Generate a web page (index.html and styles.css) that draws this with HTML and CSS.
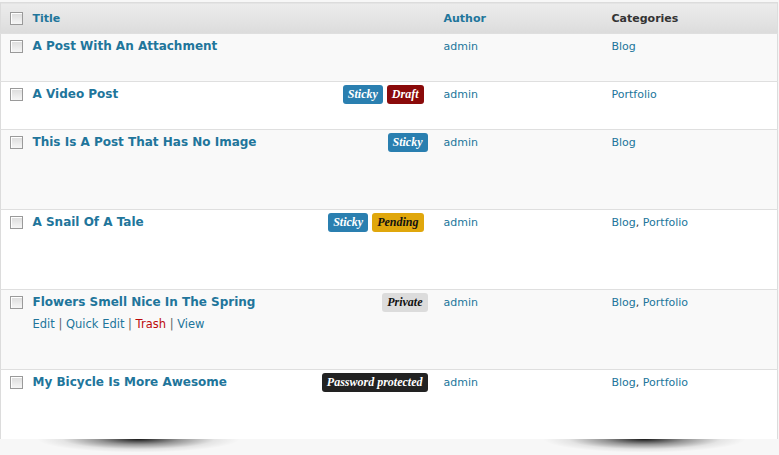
FILE: index.html
```html
<!DOCTYPE html>
<html lang="en">
<head>
    <meta charset="UTF-8">
    <meta name="viewport" content="width=device-width, initial-scale=1.0">
    <title>Posts</title>
    <link rel="stylesheet" href="styles.css">
</head>
<body>
    <div class="wrap">
        <table class="posts">
            <colgroup>
                <col class="col-check">
                <col class="col-title">
                <col class="col-author">
                <col class="col-cats">
            </colgroup>
            <thead>
                <tr>
                    <th class="check"><span class="box"></span></th>
                    <th><a href="#">Title</a></th>
                    <th><a href="#">Author</a></th>
                    <th class="plain">Categories</th>
                </tr>
            </thead>
            <tbody>
                <tr class="alt short">
                    <td class="check"><span class="box"></span></td>
                    <td class="title-cell"><div class="title-line"><a class="row-title" href="#">A Post With An Attachment</a></div></td>
                    <td><a href="#">admin</a></td>
                    <td><a href="#">Blog</a></td>
                </tr>
                <tr class="short">
                    <td class="check"><span class="box"></span></td>
                    <td class="title-cell">
                        <div class="title-line">
                            <a class="row-title" href="#">A Video Post</a>
                            <span class="badges pair"><span class="badge sticky">Sticky</span><span class="badge draft">Draft</span></span>
                        </div>
                    </td>
                    <td><a href="#">admin</a></td>
                    <td><a href="#">Portfolio</a></td>
                </tr>
                <tr class="alt tall">
                    <td class="check"><span class="box"></span></td>
                    <td class="title-cell">
                        <div class="title-line">
                            <a class="row-title" href="#">This Is A Post That Has No Image</a>
                            <span class="badges"><span class="badge sticky">Sticky</span></span>
                        </div>
                    </td>
                    <td><a href="#">admin</a></td>
                    <td><a href="#">Blog</a></td>
                </tr>
                <tr class="tall">
                    <td class="check"><span class="box"></span></td>
                    <td class="title-cell">
                        <div class="title-line">
                            <a class="row-title" href="#">A Snail Of A Tale</a>
                            <span class="badges pair"><span class="badge sticky">Sticky</span><span class="badge pending">Pending</span></span>
                        </div>
                    </td>
                    <td><a href="#">admin</a></td>
                    <td><a href="#">Blog</a>, <a href="#">Portfolio</a></td>
                </tr>
                <tr class="alt tall">
                    <td class="check"><span class="box"></span></td>
                    <td class="title-cell">
                        <div class="title-line">
                            <a class="row-title" href="#">Flowers Smell Nice In The Spring</a>
                            <span class="badges"><span class="badge private">Private</span></span>
                        </div>
                        <div class="row-actions">
                            <a href="#">Edit</a> | <a href="#">Quick Edit</a> | <a class="trash" href="#">Trash</a> | <a href="#">View</a>
                        </div>
                    </td>
                    <td><a href="#">admin</a></td>
                    <td><a href="#">Blog</a>, <a href="#">Portfolio</a></td>
                </tr>
                <tr class="last">
                    <td class="check"><span class="box"></span></td>
                    <td class="title-cell">
                        <div class="title-line">
                            <a class="row-title" href="#">My Bicycle Is More Awesome</a>
                            <span class="badges"><span class="badge protected">Password protected</span></span>
                        </div>
                    </td>
                    <td><a href="#">admin</a></td>
                    <td><a href="#">Blog</a>, <a href="#">Portfolio</a></td>
                </tr>
            </tbody>
        </table>
        <div class="shadow">
            <span class="shadow-left"></span>
            <span class="shadow-right"></span>
        </div>
    </div>
</body>
</html>
```

FILE: styles.css
```css
body {
    margin: 0;
    padding: 0;
    background: #f7f7f7;
    font-family: "DejaVu Sans", Verdana, sans-serif;
    font-size: 11px;
    color: #333;
}

.wrap {
    padding-top: 2px;
    width: 778px;
}

a {
    color: #21759b;
    text-decoration: none;
}

.posts {
    width: 778px;
    border-collapse: collapse;
    table-layout: fixed;
    background: #fff;
    border: 1px solid #dcdcdc;
    border-bottom: none;
}

.col-check { width: 25px; }
.col-title { width: 411px; }
.col-author { width: 168px; }

.posts th {
    height: 29px;
    padding: 0 7px;
    text-align: left;
    font-size: 11px;
    font-weight: bold;
    background: linear-gradient(#ececec, #dcdcdc);
    vertical-align: middle;
}

.posts th.plain {
    color: #333;
}

.posts td {
    padding: 3px 7px 0;
    vertical-align: top;
    border-top: 1px solid #dfdfdf;
    line-height: 19px;
    font-size: 11px;
}

.posts td.title-cell {
    padding-right: 9px;
}

.posts .check {
    padding: 0 0 0 9px;
}

.posts td.check {
    padding-top: 6px;
}

.posts th.check {
    padding-top: 1px;
}

.box {
    display: block;
    width: 11px;
    height: 11px;
    border: 1px solid #9a9a9a;
    background: linear-gradient(#dcdcdc, #f6f6f6);
    box-shadow: inset 1px 1px 0 #fff;
}

.posts tr.alt td {
    background: #f9f9f9;
}

.short td { height: 41px; }
.tall td { height: 73px; }
.last td { height: 63px; }

.title-line {
    display: flex;
    justify-content: space-between;
    align-items: center;
}

.row-title {
    font-size: 12px;
    font-weight: bold;
}

.badges {
    display: flex;
    gap: 4px;
}

.badges.pair {
    margin-right: 4px;
}

.badge {
    display: block;
    height: 19px;
    line-height: 19px;
    padding: 0 5px;
    border-radius: 3px;
    font-family: "Liberation Serif", "DejaVu Serif", serif;
    font-size: 12px;
    font-weight: bold;
    font-style: italic;
    color: #fff;
}

.sticky { background: #2a7fb0; }
.draft { background: #8a0a0a; }
.pending { background: #e0a70c; color: #111; }
.private { background: #dcdcdc; color: #111; }
.protected { background: #222; }

.row-actions {
    margin-top: 4px;
    line-height: 16px;
    font-size: 11.5px;
    color: #666;
}

.row-actions .trash {
    color: #bc0b0b;
}

.shadow {
    display: flex;
    justify-content: space-between;
    padding: 0 14px 0 12px;
    height: 15px;
}

.shadow-left,
.shadow-right {
    display: block;
    width: 230px;
    height: 15px;
}

.shadow-left {
    background: radial-gradient(ellipse 44% 90% at 55% 0, rgba(0, 0, 0, 0.9), rgba(0, 0, 0, 0.4) 40%, rgba(0, 0, 0, 0.08) 75%, rgba(0, 0, 0, 0) 100%);
}

.shadow-right {
    background: radial-gradient(ellipse 44% 90% at 48% 0, rgba(0, 0, 0, 0.9), rgba(0, 0, 0, 0.4) 40%, rgba(0, 0, 0, 0.08) 75%, rgba(0, 0, 0, 0) 100%);
}
```
